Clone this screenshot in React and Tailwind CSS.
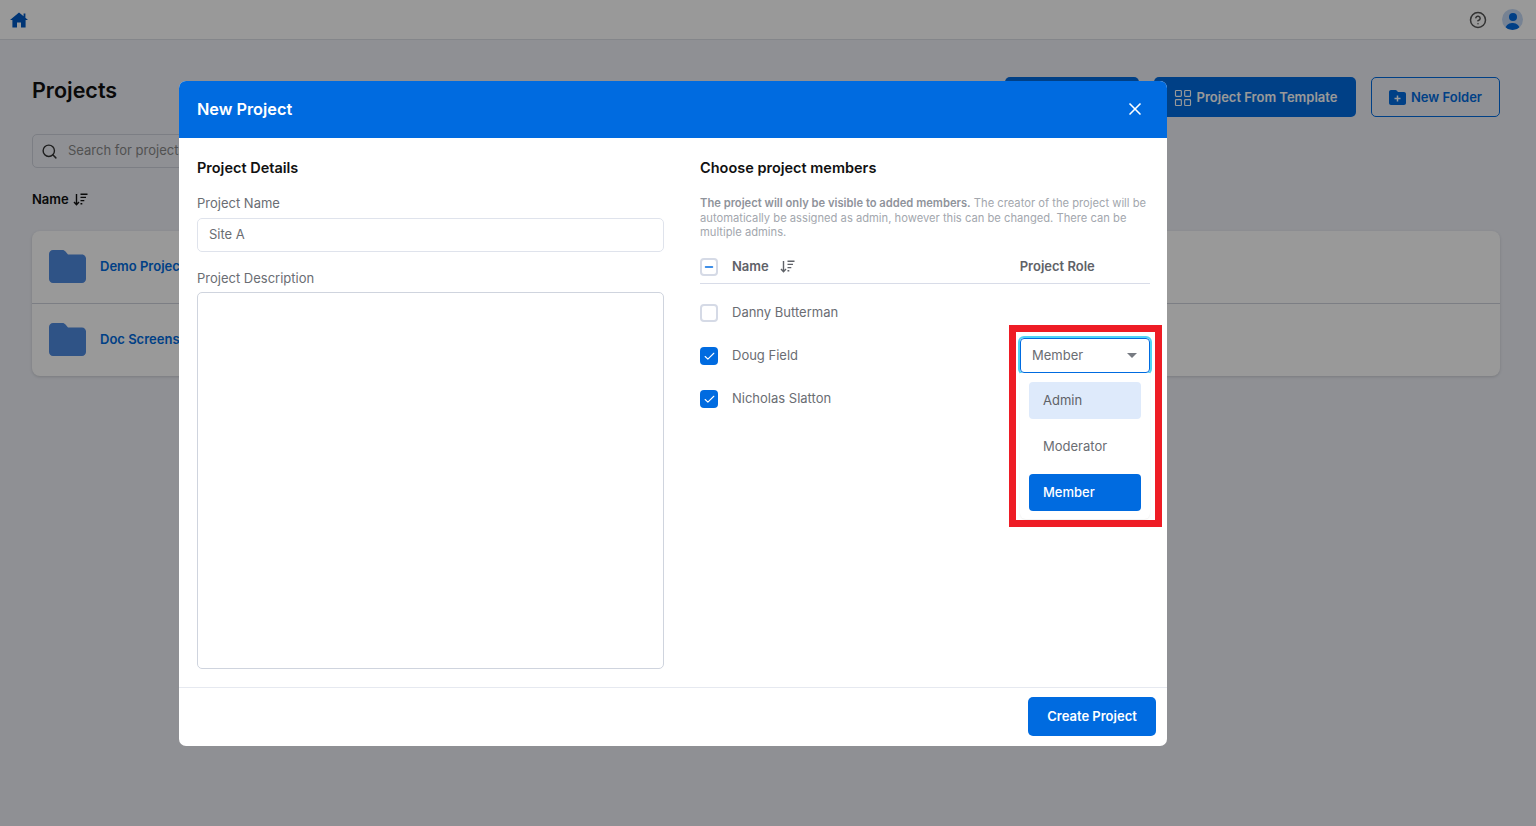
import { CircleHelp, Search, X, Check, Minus, LayoutGrid } from "lucide-react";

const font = { fontFamily: "Inter, 'Noto Sans', sans-serif" };

const HomeIcon = () => (
  <svg width="18" height="16" viewBox="0 0 18 16" fill="#0059c4">
    <path d="M9 0.4 L13.6 4.3 V1.4 H15.4 V5.8 L18 8 H15.6 V15.6 H11 V10.4 H7 V15.6 H2.4 V8 H0 Z" />
  </svg>
);

const SortIcon = ({ color = "#111" }) => (
  <svg width="15" height="13" viewBox="0 0 15 13" fill="none" stroke={color} strokeWidth="1.4">
    <path d="M3.5 1v10.5M1 9l2.5 2.7L6 9" />
    <path d="M7.5 1.2h7M7.5 4.4h5.5M7.5 7.6h3.8M7.5 10.8h1.8" />
  </svg>
);

const FolderIcon = () => (
  <svg width="37" height="33" viewBox="0 0 37 33" fill="#4f8ae0">
    <path d="M4 0h9.5c1.2 0 2.2.6 3 1.5L19 4.6h14c2.2 0 4 1.8 4 4V29c0 2.2-1.8 4-4 4H4c-2.2 0-4-1.800-4-4V4c0-2.200 1.800-4 4-4z" />
  </svg>
);

const FolderPlusIcon = () => (
  <svg width="17" height="15" viewBox="0 0 17 15">
    <path fill="#006be0" d="M2 0h4.500c.6 0 1 .3 1.400.7L9 2h6c1.100 0 2 .9 2 2v9c0 1.100-.9 2-2 2H2c-1.100 0-2-.9-2-2V2C0 .9.900 0 2 0z" />
    <path stroke="#fff" strokeWidth="1.500" d="M8.500 5.500v6M5.500 8.500h6" />
  </svg>
);

const Checkbox = ({ state }) => {
  if (state === "checked") {
    return (
      <span className="flex h-[18px] w-[18px] items-center justify-center rounded-[4px] bg-[#006be0]">
        <Check size={13} color="#fff" strokeWidth={2} />
      </span>
    );
  }
  return (
    <span className="flex h-[18px] w-[18px] items-center justify-center rounded-[4px] border-2 border-[#d5dae6] bg-white">
      {state === "mixed" && <Minus size={12} color="#006be0" strokeWidth={3} />}
    </span>
  );
};

const MemberRow = ({ name, state, children }) => (
  <div className="flex h-[43px] items-center">
    <Checkbox state={state} />
    <span className="ml-[14px] text-[13px] text-[#6a6d73]">{name}</span>
    {children}
  </div>
);

const ProjectRow = ({ name, last }) => (
  <div className={`flex items-center gap-[14px] pl-[17px] ${last ? "h-[72px]" : "h-[73px] border-b border-[#cfd3dc]"}`}>
    <FolderIcon />
    <span className="text-[13px] font-semibold text-[#006be0]">{name}</span>
  </div>
);

const RoleSelect = () => (
  <div className="relative mb-[2px] ml-auto w-[130px]">
    <div className="flex h-[35px] items-center justify-between rounded-[4px] border-[1.5px] border-[#006be0] pl-[11px] pr-[12px] pt-[1px] text-[13px] text-[#6a6d73] shadow-[0_0_0_2px_#4fd4f7]">
      Member
      <span className="h-0 w-0 border-x-[5px] border-t-[5px] border-x-transparent border-t-[#777b82]" />
    </div>
    <div className="absolute left-0 top-[35px] z-10 flex w-full flex-col gap-[9px] rounded-b-[6px] bg-white px-[9px] pb-[8px] pt-[9px] shadow-[0_1px_2px_rgba(0,0,0,0.06)]">
      <div className="flex h-[37px] items-center rounded-[4px] bg-[#deeafb] pl-[14px] pt-[1px] text-[13px] text-[#5f6268]">Admin</div>
      <div className="flex h-[37px] items-center pl-[14px] pt-[1px] text-[13px] text-[#6a6d73]">Moderator</div>
      <div className="flex h-[37px] items-center rounded-[4px] bg-[#006be0] pl-[14px] pt-[1px] text-[13px] font-medium text-white">Member</div>
    </div>
  </div>
);

export default function App() {
  return (
    <div className="relative h-[826px] w-[1536px] overflow-hidden bg-[#eef0f7]" style={font}>
      {/* page behind the dialog */}
      <header className="flex h-[40px] items-center justify-between border-b border-[#dcdfe6] bg-white pl-[10px] pr-[13px]">
        <HomeIcon />
        <div className="flex items-center gap-[15px]">
          <CircleHelp size={18} color="#555" />
          <span className="relative flex h-[21px] w-[21px] items-end justify-center overflow-hidden rounded-full bg-[#c5d9f5]">
            <span className="absolute top-[4px] h-[8px] w-[8px] rounded-full bg-[#0069e0]" />
            <span className="h-[7px] w-[15px] rounded-t-full bg-[#0069e0]" />
          </span>
        </div>
      </header>

      <main className="pl-[32px] pr-[36px]">
        <div className="flex h-[77px] items-end justify-between">
          <h1 className="mb-[11px] text-[21.500px] font-semibold text-[#111]">Projects</h1>
          <div className="flex gap-[15px]">
            <button className="h-[40px] w-[134px] rounded-[5px] bg-[#006be0]" />
            <button className="flex h-[40px] w-[202px] items-center justify-center gap-[4px] rounded-[5px] bg-[#006be0] pt-[1px] text-[13px] font-semibold text-white">
              <LayoutGrid size={20} strokeWidth={1.4} />
              Project From Template
            </button>
            <button className="flex h-[40px] w-[129px] items-center justify-center gap-[5px] rounded-[5px] border border-[#006be0] pt-[1px] text-[13px] font-semibold text-[#006be0]">
              <FolderPlusIcon />
              New Folder
            </button>
          </div>
        </div>
        <div className="mt-[17px] flex h-[34px] w-[300px] items-center gap-[10px] rounded-[5px] border border-[#cfd3dc] pl-[8px] text-[13px] text-[#888]">
          <Search size={17} color="#333" />
          Search for projects
        </div>
        <div className="mt-[22px] flex items-center gap-[4px] text-[13px] font-semibold text-[#111]">
          Name <SortIcon />
        </div>
        <div className="mt-[21px] overflow-hidden rounded-[8px] bg-white shadow-[0_1px_3px_rgba(0,0,0,0.15)]">
          <ProjectRow name="Demo Project" />
          <ProjectRow name="Doc Screenshots" last />
        </div>
      </main>

      {/* dim layer + dialog */}
      <div className="absolute inset-0 bg-black/40">
        <div className="absolute left-[179px] top-[81px] flex h-[665px] w-[988px] flex-col overflow-hidden rounded-[7px] bg-white">
          <div className="flex h-[57px] shrink-0 items-center justify-between bg-[#006be0] pb-[1px] pl-[18px] pr-[22px]">
            <h2 className="text-[16.300px] font-semibold text-white">New Project</h2>
            <X size={20} color="#fff" strokeWidth={2} />
          </div>

          <div className="flex flex-1 pl-[18px] pr-[17px]">
            <section className="flex w-[467px] flex-col pb-[18px] pt-[21px]">
              <h3 className="text-[14.500px] font-semibold leading-[17px] text-[#111]">Project Details</h3>
              <label className="mt-[19px] text-[13px] leading-[16px] text-[#6a6d73]">Project Name</label>
              <div className="mt-[7px] flex h-[34px] items-center rounded-[5px] border border-[#dfe3ec] pl-[11px] text-[13px] text-[#6a6d73]">Site A</div>
              <label className="mt-[18px] text-[13px] leading-[16px] text-[#6a6d73]">Project Description</label>
              <div className="mt-[6px] flex-1 rounded-[5px] border border-[#cfd4de]" />
            </section>

            <section className="ml-[36px] flex w-[450px] flex-col pt-[21px]">
              <h3 className="text-[14.500px] font-semibold leading-[17px] text-[#111]">Choose project members</h3>
              <p className="mt-[20px] text-[11.200px] leading-[14.500px] text-[#a3a7ae]">
                <b className="font-semibold text-[#8f939b]">The project will only be visible to added members.</b> The creator of the project will be automatically be assigned as admin, however this can be changed. There can be multiple admins.
              </p>
              <div className="mt-[11px] flex h-[33px] items-center border-b border-[#d8dce8]">
                <Checkbox state="mixed" />
                <span className="ml-[14px] text-[13px] font-semibold text-[#5f6268]">Name</span>
                <span className="ml-[11px]"><SortIcon color="#5f6268" /></span>
                <span className="ml-[225px] text-[13px] font-semibold text-[#5f6268]">Project Role</span>
              </div>
              <div className="mt-[8px]">
                <MemberRow name="Danny Butterman" state="empty" />
                <MemberRow name="Doug Field" state="checked"><RoleSelect /></MemberRow>
                <MemberRow name="Nicholas Slatton" state="checked" />
              </div>
            </section>
          </div>

          <div className="flex h-[59px] shrink-0 items-start justify-end border-t border-[#e6e9f0] pr-[11px] pt-[9px]">
            <button className="h-[39px] w-[128px] rounded-[5px] bg-[#006be0] text-[13px] font-semibold text-white">Create Project</button>
          </div>
        </div>

        {/* red annotation box from the docs screenshot */}
        <div className="absolute left-[1009px] top-[325px] z-20 h-[202px] w-[153px] border-[7px] border-[#ee1c25]" />
      </div>
    </div>
  );
}
